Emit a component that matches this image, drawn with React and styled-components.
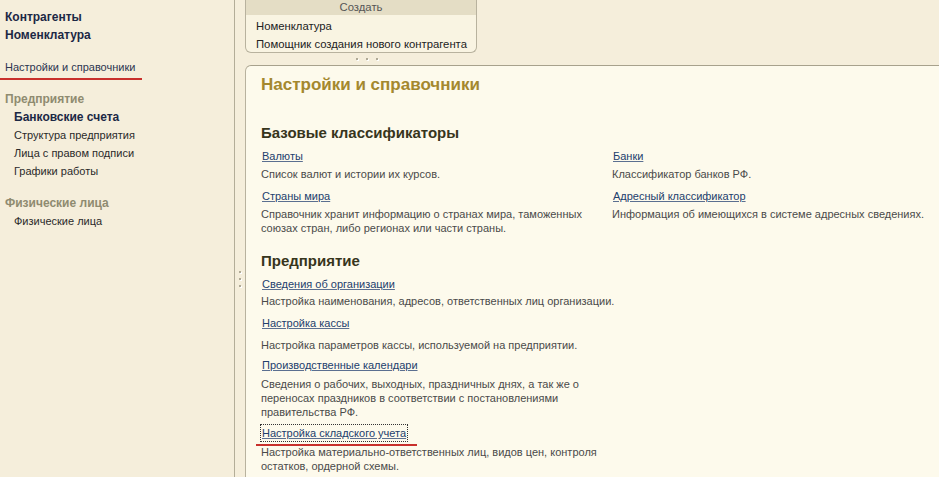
import React from "react";
import styled, { createGlobalStyle } from "styled-components";

const GlobalStyle = createGlobalStyle`
  html, body {
    margin: 0;
    padding: 0;
    height: 100%;
    overflow: hidden;
  }
  body {
    font-family: "Liberation Sans", Arial, sans-serif;
    font-size: 11px;
    background: #f5eedb;
  }
  #root {
    height: 100%;
  }
`;

const Layout = styled.div`
  display: grid;
  grid-template-columns: 235px 10px 1fr;
  height: 477px;
  background: #f5eedb;
`;

const Sidebar = styled.nav`
  border-right: 1px solid #b3ad98;
  padding: 8px 0 0 5px;
  display: flex;
  flex-direction: column;
`;

const NavLink = styled.a`
  display: block;
  color: ${(p) => (p.$bold ? "#1c2845" : "#2a2a2a")};
  font-weight: ${(p) => (p.$bold ? "bold" : "normal")};
  font-size: ${(p) => (p.$bold ? "12px" : "11px")};
  line-height: 18px;
  padding-left: ${(p) => (p.$indent ? "9px" : "0")};
  text-decoration: none;
`;

const ActiveLink = styled.a`
  display: block;
  width: 142px;
  margin: 14px 0 0 -5px;
  padding: 0 0 2px 5px;
  color: #2c3550;
  font-size: 11px;
  line-height: 18px;
  border-bottom: 2px solid #c8302c;
  box-sizing: border-box;
`;

const GroupTitle = styled.div`
  color: #8f8b70;
  font-weight: bold;
  font-size: 12px;
  line-height: 18px;
  margin-top: ${(p) => p.$gap || 0}px;
`;

const Splitter = styled.div`
  display: flex;
  flex-direction: column;
  align-items: center;
  gap: 5px;
  padding-top: 271px;
`;

const Grip = styled.span`
  width: 2px;
  height: 2px;
  background: #b0aa96;
  box-shadow: 1px 1px 0 #fff;
`;

const Content = styled.div`
  display: flex;
  flex-direction: column;
  min-width: 0;
`;

const CreatePanel = styled.div`
  width: 232px;
  height: 53px;
  box-sizing: border-box;
  background: #f9f4e2;
  border: 1px solid #b8b29e;
  border-top: none;
  border-radius: 0 0 6px 6px;
`;

const CreateHeader = styled.div`
  background: #e4ddc5;
  color: #555;
  text-align: center;
  font-size: 11.3px;
  line-height: 15px;
  height: 15px;
  margin-bottom: 2px;
`;

const CreateItem = styled.div`
  color: #222;
  padding-left: 10px;
  font-size: 11.3px;
  line-height: 18px;
`;

const HSplit = styled.div`
  display: flex;
  gap: 8px;
  padding-left: 111px;
  height: 12px;
  align-items: center;
`;

const MainPanel = styled.main`
  flex: 1;
  background: #fdfaec;
  border-top: 1px solid #a7a18c;
  border-left: 1px solid #b8b29e;
  border-top-left-radius: 6px;
  padding: 7px 0 0 15px;
  color: #444;
`;

const Title = styled.h1`
  margin: 0;
  font-size: 17px;
  line-height: 24px;
  color: #a4882e;
  font-weight: bold;
`;

const SectionTitle = styled.h2`
  margin: ${(p) => p.$top}px 0 0;
  font-size: 15px;
  line-height: 20px;
  color: #37351c;
  font-weight: bold;
`;

const Columns = styled.div`
  display: grid;
  grid-template-columns: 351px 1fr;
`;

const Column = styled.div`
  display: flex;
  flex-direction: column;
`;

const Entry = styled.div`
  margin-top: ${(p) => p.$top || 0}px;
`;

const ItemLink = styled.a`
  display: inline-block;
  color: #23406d;
  font-size: 11px;
  text-decoration: underline;
  text-decoration-color: #5b6f90;
  line-height: 16px;
  padding: 0 1px;
  border: 1px dotted ${(p) => (p.$focus ? "#333" : "transparent")};
  margin: ${(p) => (p.$focus ? "0" : "-1px")} 0 ${(p) => (p.$focus ? "0" : "-1px")} -1px;
  position: relative;
`;

const Marker = styled.span`
  position: absolute;
  left: -5px;
  bottom: -5px;
  width: 161px;
  height: 2px;
  background: #c8302c;
`;

const Desc = styled.div`
  color: #4a4a4a;
  font-size: 11px;
  line-height: 14px;
  margin-top: ${(p) => p.$top || 0}px;
  max-width: ${(p) => p.$max || 400}px;
`;

const basics = [
  [
    { name: "Валюты", text: "Список валют и истории их курсов." },
    {
      name: "Страны мира",
      text: "Справочник хранит информацию о странах мира, таможенных союзах стран, либо регионах или части страны.",
    },
  ],
  [
    { name: "Банки", text: "Классификатор банков РФ." },
    {
      name: "Адресный классификатор",
      text: "Информация об имеющихся в системе адресных сведениях.",
    },
  ],
];

const company = [
  {
    name: "Сведения об организации",
    text: "Настройка наименования, адресов, ответственных лиц организации.",
    gap: 5,
    descGap: 2,
  },
  {
    name: "Настройка кассы",
    text: "Настройка параметров кассы, используемой на предприятии.",
    gap: 7,
    descGap: 7,
  },
  {
    name: "Производственные календари",
    text: "Сведения о рабочих, выходных, праздничных днях, а так же о переносах праздников в соответствии с постановлениями правительства РФ.",
    gap: 5,
    descGap: 4,
  },
  {
    name: "Настройка складского учета",
    text: "Настройка материально-ответственных лиц, видов цен, контроля остатков, ордерной схемы.",
    gap: 5,
    descGap: 3,
    focus: true,
  },
];

export default function App() {
  return (
    <>
      <GlobalStyle />
      <Layout>
        <Sidebar>
          <NavLink $bold>Контрагенты</NavLink>
          <NavLink $bold>Номенклатура</NavLink>
          <ActiveLink>Настройки и справочники</ActiveLink>
          <GroupTitle $gap={10}>Предприятие</GroupTitle>
          <NavLink $bold $indent>Банковские счета</NavLink>
          <NavLink $indent>Структура предприятия</NavLink>
          <NavLink $indent>Лица с правом подписи</NavLink>
          <NavLink $indent>Графики работы</NavLink>
          <GroupTitle $gap={14}>Физические лица</GroupTitle>
          <NavLink $indent>Физические лица</NavLink>
        </Sidebar>
        <Splitter>
          <Grip />
          <Grip />
          <Grip />
        </Splitter>
        <Content>
          <CreatePanel>
            <CreateHeader>Создать</CreateHeader>
            <CreateItem>Номенклатура</CreateItem>
            <CreateItem>Помощник создания нового контрагента</CreateItem>
          </CreatePanel>
          <HSplit>
            <Grip />
            <Grip />
            <Grip />
          </HSplit>
          <MainPanel>
            <Title>Настройки и справочники</Title>
            <SectionTitle $top={26}>Базовые классификаторы</SectionTitle>
            <Columns>
              {basics.map((col, ci) => (
                <Column key={ci}>
                  {col.map((it, i) => (
                    <Entry key={it.name} $top={i === 0 ? 5 : 7}>
                      <ItemLink>{it.name}</ItemLink>
                      <Desc $top={3} $max={345}>
                        {it.text}
                      </Desc>
                    </Entry>
                  ))}
                </Column>
              ))}
            </Columns>
            <SectionTitle $top={16}>Предприятие</SectionTitle>
            {company.map((it) => (
              <Entry key={it.name} $top={it.gap}>
                <ItemLink $focus={it.focus}>
                  {it.name}
                  {it.focus && <Marker />}
                </ItemLink>
                <Desc $top={it.descGap} $max={365}>
                  {it.text}
                </Desc>
              </Entry>
            ))}
          </MainPanel>
        </Content>
      </Layout>
    </>
  );
}
